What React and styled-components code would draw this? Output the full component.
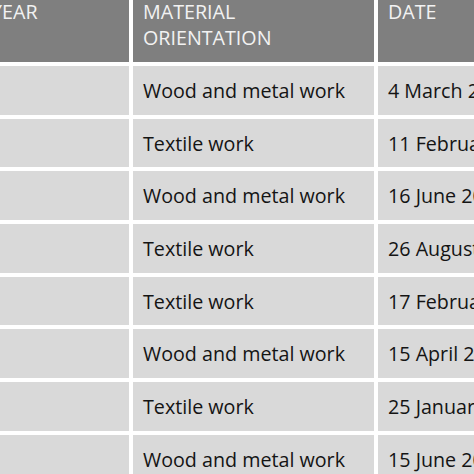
import React from "react";
import styled, { createGlobalStyle } from "styled-components";

const Global = createGlobalStyle`
  html, body { margin: 0; padding: 0; background: #ffffff; }
  body { width: 474px; height: 474px; overflow: hidden; }
`;

const Viewport = styled.div`
  width: 474px;
  height: 474px;
  overflow: hidden;
  background: #ffffff;
`;

const Grid = styled.div`
  display: grid;
  grid-template-columns: 148px 241px 220px;
  grid-template-rows: 62px;
  grid-auto-rows: 48.7px;
  gap: 4px;
  margin-left: -19px;
  font-family: "Open Sans", "Noto Sans", sans-serif;
`;

const HeadCell = styled.div`
  background: #7f7f7f;
  color: #f2f2f2;
  font-size: 19.7px;
  line-height: 26px;
  padding: 0 10px;
  margin-top: -1px;
  white-space: nowrap;
  overflow: hidden;
`;

const Cell = styled.div`
  background: #d9d9d9;
  color: #141414;
  font-size: 19.7px;
  display: flex;
  align-items: center;
  padding: 0 10px;
  white-space: nowrap;
  overflow: hidden;
`;

const rows = [
  ["Wood and metal work", "4 March 2016"],
  ["Textile work", "11 February 2016"],
  ["Wood and metal work", "16 June 2016"],
  ["Textile work", "26 August 2016"],
  ["Textile work", "17 February 2017"],
  ["Wood and metal work", "15 April 2017"],
  ["Textile work", "25 January 2017"],
  ["Wood and metal work", "15 June 2017"],
];

export default function App() {
  return (
    <Viewport>
      <Global />
      <Grid>
        <HeadCell>YEAR</HeadCell>
        <HeadCell>
          MATERIAL
          <br />
          ORIENTATION
        </HeadCell>
        <HeadCell>DATE</HeadCell>
        {rows.map(([m, d], i) => (
          <React.Fragment key={i}>
            <Cell />
            <Cell>{m}</Cell>
            <Cell>{d}</Cell>
          </React.Fragment>
        ))}
      </Grid>
    </Viewport>
  );
}
